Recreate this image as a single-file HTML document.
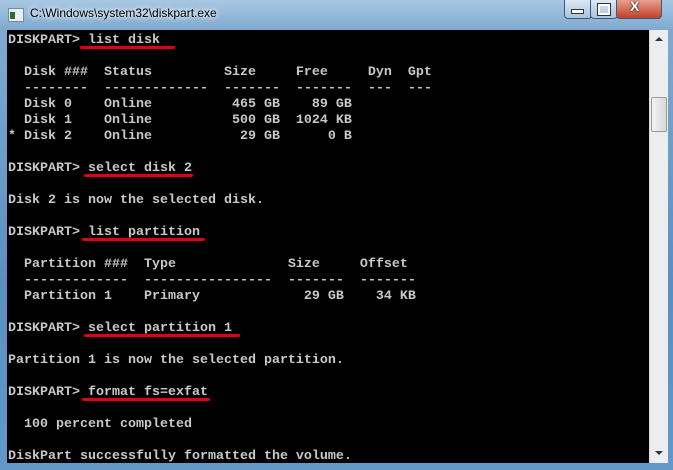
<!DOCTYPE html>
<html><head><style>
body{margin:0;width:673px;height:470px;overflow:hidden;background:#5a8fbf;position:relative;font-family:"Liberation Sans",sans-serif}
.frame{position:absolute;left:0;top:0;width:673px;height:470px;background:linear-gradient(180deg,#a8c8e2 0,#7fa9d0 30px,#5a8fc0 60%,#6299c8 100%)}
.title{position:absolute;left:30px;top:6px;font-size:12px;color:#000;text-shadow:0 0 6px #fff,0 0 6px #fff}
.ico{position:absolute;left:8px;top:8px;width:14px;height:12px;background:#e8eef2;border:1px solid #7a8a96}
.ico:after{content:"";position:absolute;left:1px;top:3px;width:5px;height:7px;background:#2c6a3a}
.btn{position:absolute;top:0;height:18px;border:1px solid #3a5a7a;border-top:none;border-radius:0 0 4px 4px;background:linear-gradient(#dce8f4,#a9c2dc)}
.con{position:absolute;left:7px;top:30px;width:642px;height:433px;background:#000}
pre{margin:0;position:absolute;left:1px;top:3px;font-family:"Liberation Mono",monospace;font-size:13.33px;line-height:16px;color:#c8c8c8;font-weight:bold;letter-spacing:0}
.sb{position:absolute;left:649px;top:30px;width:18px;height:433px;background:#ecedee;border-left:1px solid #d8d8d8}
.thumb{position:absolute;left:1px;top:67px;width:14px;height:33px;border:1px solid #9a9a9a;border-radius:2px;background:linear-gradient(90deg,#f2f2f2,#d8d8d8)}
.u{position:absolute;height:3px;background:#e00010;border-radius:2px}
</style></head><body>
<div class="frame"></div>
<div class="ico"></div>
<div class="title">C:\Windows\system32\diskpart.exe</div>
<div class="btn" style="left:564px;width:26px"></div>
<div class="btn" style="left:590px;width:26px"></div>
<div class="btn" style="left:616px;width:44px;background:linear-gradient(#e8a090,#c0402a)"></div>
<div style="position:absolute;left:571px;top:9px;width:11px;height:3px;background:#fff;border:1px solid #333"></div>
<div style="position:absolute;left:598px;top:4px;width:8px;height:7px;border:2px solid #fff;outline:1px solid #333"></div>
<div style="position:absolute;left:630px;top:-2px;color:#fff;font-weight:bold;font-size:14px;text-shadow:0 0 2px #000">X</div>
<div class="con"><pre>DISKPART&gt; list disk

  Disk ###  Status         Size     Free     Dyn  Gpt
  --------  -------------  -------  -------  ---  ---
  Disk 0    Online          465 GB    89 GB
  Disk 1    Online          500 GB  1024 KB
* Disk 2    Online           29 GB      0 B

DISKPART&gt; select disk 2

Disk 2 is now the selected disk.

DISKPART&gt; list partition

  Partition ###  Type              Size     Offset
  -------------  ----------------  -------  -------
  Partition 1    Primary             29 GB    34 KB

DISKPART&gt; select partition 1

Partition 1 is now the selected partition.

DISKPART&gt; format fs=exfat

  100 percent completed

DiskPart successfully formatted the volume.</pre></div>
<div class="u" style="left:80px;top:46px;width:95px"></div>
<div class="u" style="left:84px;top:174px;width:109px"></div>
<div class="u" style="left:82px;top:238px;width:123px"></div>
<div class="u" style="left:84px;top:334px;width:156px"></div>
<div class="u" style="left:82px;top:398px;width:128px"></div>
<div class="sb"><div style="position:absolute;left:5px;top:7px;border:4px solid transparent;border-bottom:4px solid #333;border-top:none"></div><div class="thumb"></div><div style="position:absolute;left:5px;bottom:8px;border:4px solid transparent;border-top:4px solid #333;border-bottom:none"></div></div>
</body></html>
